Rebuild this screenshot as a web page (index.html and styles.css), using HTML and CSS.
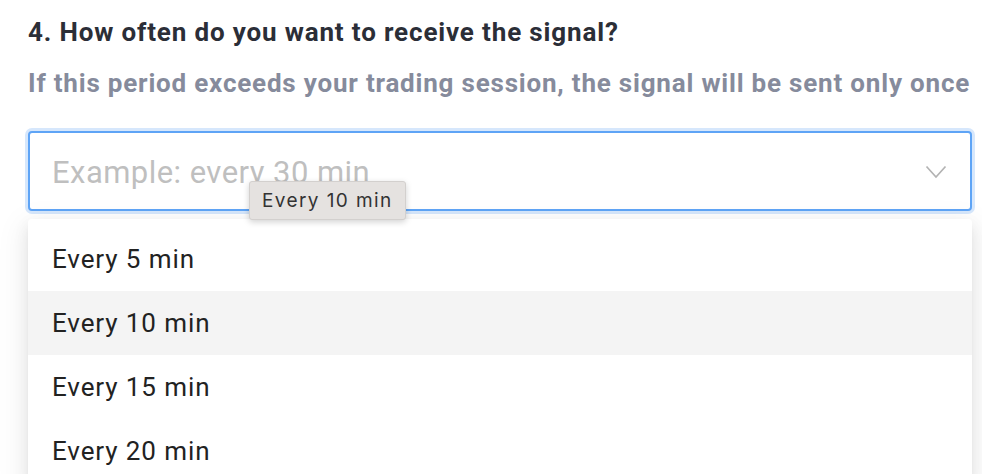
FILE: index.html
```html
<!DOCTYPE html>
<html lang="en">
<head>
<meta charset="utf-8">
<title>Signal frequency</title>
<link rel="stylesheet" href="styles.css">
</head>
<body>
<div class="field">
  <h2 class="question">4. How often do you want to receive the signal?</h2>
  <p class="hint">If this period exceeds your trading session, the signal will be sent only once</p>
  <div class="select">
    <div class="select-box">
      <span class="placeholder">Example: every 30 min</span>
      <svg class="chevron" width="22" height="14" viewBox="0 0 22 14"><path d="M1.5 1.5 L11 12 L20.5 1.5" fill="none" stroke="#b3b3b3" stroke-width="1.7"/></svg>
    </div>
    <ul class="dropdown">
      <li class="option">Every 5 min</li>
      <li class="option active">Every 10 min</li>
      <li class="option">Every 15 min</li>
      <li class="option">Every 20 min</li>
    </ul>
    <div class="tooltip">Every 10 min</div>
  </div>
</div>
</body>
</html>
```

FILE: styles.css
```css
html, body {
  margin: 0;
  padding: 0;
  background: #ffffff;
  overflow: hidden;
}
body {
  font-family: Roboto, "Liberation Sans", sans-serif;
  width: 982px;
  height: 474px;
}
.field {
  padding: 17px 10px 0 28px;
}
.question {
  margin: 0;
  font-size: 26px;
  font-weight: 700;
  letter-spacing: 0.85px;
  color: #2b2e37;
  line-height: 30px;
  white-space: nowrap;
}
.hint {
  margin: 21px 0 0;
  font-size: 26px;
  font-weight: 700;
  letter-spacing: 0.8px;
  color: #868b9c;
  line-height: 30px;
  white-space: nowrap;
}
.select {
  position: relative;
  margin-top: 33px;
}
.select-box {
  height: 76px;
  border: 2px solid #5ea4f6;
  border-radius: 4px;
  box-shadow: 0 0 0 3px #d6e7fc;
  display: flex;
  align-items: center;
  justify-content: space-between;
  padding: 0 22px 0 22px;
  background: #fff;
}
.placeholder {
  font-size: 31px;
  letter-spacing: 0.45px;
  line-height: 36px;
  color: #bfbfbf;
  margin-top: 3px;
}
.chevron {
  margin-right: 1px;
  margin-top: 1px;
}
.dropdown {
  position: absolute;
  top: 88px;
  left: 0;
  right: 0;
  margin: 0;
  padding: 8px 0 0;
  list-style: none;
  background: #fff;
  border-radius: 4px;
  box-shadow: 0 3px 6px -4px rgba(0,0,0,0.12), 0 6px 16px 0 rgba(0,0,0,0.08), 0 9px 28px 8px rgba(0,0,0,0.05);
  z-index: 2;
}
.option {
  height: 64px;
  display: flex;
  align-items: center;
  padding: 0 24px;
  font-size: 26px;
  letter-spacing: 0.9px;
  color: #222222;
}
.option.active {
  background: #f4f4f4;
}
.tooltip {
  position: absolute;
  left: 221px;
  top: 50px;
  z-index: 3;
  padding: 0 12px;
  height: 37px;
  display: flex;
  align-items: center;
  background: #e5e2e0;
  border: 1px solid #d3d0ce;
  border-radius: 3px;
  box-shadow: 0 2px 6px rgba(0,0,0,0.18);
  font-family: Inter, "Liberation Sans", sans-serif;
  font-size: 19px;
  letter-spacing: 1.4px;
  color: #333333;
  white-space: nowrap;
}
```
